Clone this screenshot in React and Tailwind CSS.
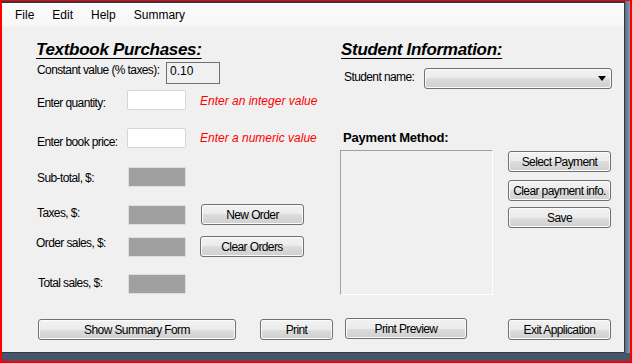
const ui = { fontFamily: '"Liberation Sans", Arial, sans-serif' };

function Btn({ children, className = "" }) {
  return (
    <div
      className={
        "flex items-center justify-center rounded-[3px] border border-[#707070] bg-[linear-gradient(#f2f2f2_0%,#ebebeb_50%,#dddddd_50%,#cfcfcf_100%)] shadow-[inset_0_0_0_1px_#fbfbfb] text-[12px] tracking-[-0.6px] text-black leading-none " +
        className
      }
    >
      {children}
    </div>
  );
}

function Input() {
  return <div className="w-[59px] h-[20px] bg-white border border-[#d6d6d6] rounded-[2px]" />;
}

function ReadOnly() {
  return <div className="w-[58px] h-[20px] bg-[#a0a0a0] border border-[#dedede]" />;
}

export default function App() {
  const label = "text-[12px] tracking-[-0.6px] leading-[16px] text-black whitespace-nowrap";
  const hint = "text-[12px] italic leading-[16px] text-[#ff0000] whitespace-nowrap";
  const heading = "h-[20px] leading-[20px] text-[17px] font-bold italic underline underline-offset-[3px] tracking-[-0.3px] text-black whitespace-nowrap";
  const row = "flex items-start h-[20px]";

  return (
    <div className="w-[632px] h-[363px] bg-[#ff0000] pt-px pl-[2px] pr-[2px] pb-[2px] flex overflow-hidden" style={ui}>
      <div className="flex-1 flex flex-col">
        <div className="flex-1 flex">
          {/* window client area */}
          <div className="flex-1 flex flex-col bg-[#f0f0f0] border-t-2 border-r border-b border-[#2f3744]">
            {/* menu bar */}
            <div className="h-[24px] flex items-center pl-[4px] bg-[linear-gradient(#fcfcfc,#f6f6f6)] text-[12px] text-black">
              <span className="px-[9px]">File</span>
              <span className="px-[9px]">Edit</span>
              <span className="px-[9px]">Help</span>
              <span className="px-[9px]">Summary</span>
            </div>

            <div className="flex flex-col pl-[34px] pt-[13px]">
              <div className="flex h-[255px]">
                {/* Textbook purchases */}
                <div className="w-[304px] flex flex-col">
                  <div className={heading}>Textbook Purchases:</div>

                  <div className="mt-[2px] flex items-start h-[22px]">
                    <div className={label + " w-[130px] pl-px"}>Constant value (% taxes):</div>
                    <div className="w-[54px] h-[22px] border border-[#707070] pl-[3px] text-[12px] leading-[16px]">0.10</div>
                  </div>

                  <div className={row + " mt-[6px]"}>
                    <div className={label + " w-[91px] pl-px pt-[5px]"}>Enter quantity:</div>
                    <Input />
                    <div className={hint + " ml-[14px] pt-[3px]"}>Enter an integer value</div>
                  </div>

                  <div className={row + " mt-[18px]"}>
                    <div className={label + " w-[91px] pl-px pt-[6px]"}>Enter book price:</div>
                    <Input />
                    <div className={hint + " ml-[14px] pt-[2px]"}>Enter a numeric value</div>
                  </div>

                  <div className={row + " mt-[19px]"}>
                    <div className={label + " w-[92px] pl-px pt-[3px]"}>Sub-total, $:</div>
                    <ReadOnly />
                  </div>

                  <div className={row + " mt-[18px]"}>
                    <div className={label + " w-[92px] pl-px"}>Taxes, $:</div>
                    <ReadOnly />
                    <Btn className="ml-[15px] -mt-px w-[103px] h-[21px]">New Order</Btn>
                  </div>

                  <div className={row + " mt-[12px]"}>
                    <div className={label + " w-[92px] -mt-[2px]"}>Order sales, $:</div>
                    <ReadOnly />
                    <Btn className="ml-[14px] -mt-px w-[104px] h-[21px]">Clear Orders</Btn>
                  </div>

                  <div className={row + " mt-[17px]"}>
                    <div className={label + " w-[92px] pl-[2px] pt-px"}>Total sales, $:</div>
                    <ReadOnly />
                  </div>
                </div>

                {/* Student information */}
                <div className="w-[272px] flex flex-col">
                  <div className={heading + " pl-px"}>Student Information:</div>

                  <div className="mt-[8px] flex items-start h-[21px]">
                    <div className={label + " w-[84px] pl-[4px] pt-px"}>Student name:</div>
                    <div className="w-[188px] h-[21px] rounded-[3px] border border-[#707070] bg-[linear-gradient(#f2f2f2_0%,#ebebeb_50%,#dddddd_50%,#cfcfcf_100%)] shadow-[inset_0_0_0_1px_#fbfbfb] flex items-center justify-end pr-[5px]">
                      <svg width="8" height="5" viewBox="0 0 8 5">
                        <path d="M0 0 H8 L4 5 Z" fill="#000" />
                      </svg>
                    </div>
                  </div>

                  <div className="mt-[41px] pl-[3px] text-[13px] font-bold leading-[16px] tracking-[-0.2px] text-black">Payment Method:</div>

                  <div className="mt-[4px] flex items-start">
                    <div className="w-[153px] h-[145px] border border-[#a0a0a0] border-r-white border-b-white bg-[#f0f0f0]" />
                    <div className="ml-[15px] w-[103px] flex flex-col">
                      <Btn className="mt-px h-[21px]">Select Payment</Btn>
                      <Btn className="mt-[8px] h-[21px]">Clear payment info.</Btn>
                      <Btn className="mt-[6px] h-[21px]">Save</Btn>
                    </div>
                  </div>
                </div>
              </div>

              {/* bottom buttons */}
              <div className="mt-[23px] flex items-start">
                <Btn className="ml-[2px] mt-px w-[198px] h-[21px]">Show Summary Form</Btn>
                <Btn className="ml-[24px] mt-px w-[73px] h-[21px]">Print</Btn>
                <Btn className="ml-[12px] w-[122px] h-[21px]">Print Preview</Btn>
                <Btn className="ml-[41px] mt-px w-[103px] h-[21px]">Exit Application</Btn>
              </div>
            </div>
          </div>
          {/* right frame edge */}
          <div className="w-[5px] bg-[linear-gradient(90deg,#5d6b80,#8797ad)]" />
        </div>
        {/* bottom frame edge */}
        <div className="h-[8px] bg-[#45556b]" />
      </div>
    </div>
  );
}
